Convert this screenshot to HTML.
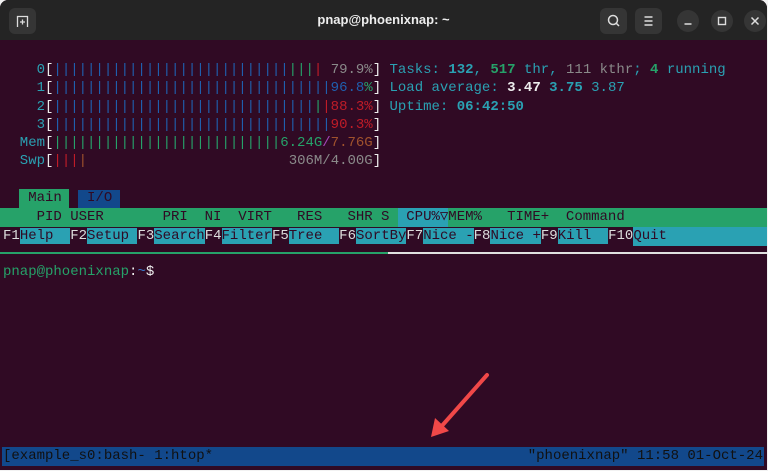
<!DOCTYPE html>
<html><head><meta charset="utf-8"><style>
*{margin:0;padding:0;box-sizing:border-box}
html,body{width:768px;height:471px;overflow:hidden;background:#f2f2f2}
#win{position:absolute;left:0;top:0;width:767px;height:470px;background:#300a24;border-radius:8px 8px 0 0;overflow:hidden}
#tb{position:absolute;left:0;top:0;width:767px;height:40px;background:#242424}
.btn{position:absolute;top:8px;width:27px;height:26px;background:#353535;border-radius:6px}
.cir{position:absolute;top:10px;width:22px;height:22px;background:#353535;border-radius:50%}
#title{position:absolute;left:0;width:767px;top:12px;text-align:center;color:#eee;font:bold 13px "Liberation Sans",sans-serif}
.t{position:absolute;left:3px;font:14px/18.3px "Liberation Mono",monospace;white-space:pre;color:#ccc}
.b{color:#1f5fae}.g{color:#26a269}.r{color:#c01c28}.c{color:#2aa1b3}.w{color:#eee}.gr{color:#8a8a8a}.o{color:#a0522d}.m{color:#a347ba}
.fk{color:#ddd}.fl{background:#2aa1b3;color:#300a24}
</style></head><body>
<div id="win">
<div id="tb">
 <div class="btn" style="left:9px"><svg width="27" height="26"><path d="M8.5 19V8.5h10V19M11 14h5M13.5 11.5v5" stroke="#ddd" stroke-width="1.3" fill="none"/></svg></div>
 <div id="title">pnap@phoenixnap: ~</div>
 <div class="btn" style="left:600px"><svg width="27" height="26"><circle cx="13" cy="12" r="4.5" stroke="#ddd" stroke-width="1.5" fill="none"/><path d="M16 15l3 3" stroke="#ddd" stroke-width="1.5"/></svg></div>
 <div class="btn" style="left:635px"><svg width="27" height="26"><path d="M9.5 9h8M9.5 13h8M9.5 17h8" stroke="#ddd" stroke-width="1.4"/></svg></div>
 <div class="cir" style="left:677px"><svg width="22" height="22"><path d="M7.5 14h7" stroke="#ddd" stroke-width="1.5"/></svg></div>
 <div class="cir" style="left:711px"><svg width="22" height="22"><rect x="7.5" y="7.5" width="7" height="7" stroke="#ddd" stroke-width="1.4" fill="none"/></svg></div>
 <div class="cir" style="left:744px"><svg width="22" height="22"><path d="M7.5 7.5l7 7M14.5 7.5l-7 7" stroke="#ddd" stroke-width="1.5"/></svg></div>
</div>
<div class="t" style="top:61px"><span class="c">    0</span><span class="w">[</span><span class="b">||||||||||||||||||||||||||||</span><span class="g">|||</span><span class="r">|</span> <span class="gr">79.9%</span><span class="w">]</span> <span class="c">Tasks: </span><b class="c">132</b><span class="c">, </span><b class="g">517</b><span class="c"> thr, </span><span class="gr">111 kthr</span><span class="c">; </span><b class="g">4</b><span class="c"> running</span>
<span class="c">    1</span><span class="w">[</span><span class="b">|||||||||||||||||||||||||||||||||96.8</span><span class="g">%</span><span class="w">]</span> <span class="c">Load average: </span><b class="w">3.47</b> <b class="c">3.75</b> <span class="c">3.87</span>
<span class="c">    2</span><span class="w">[</span><span class="b">|||||||||||||||||||||||||||||||</span><span class="g">|</span><span class="r">|88.3%</span><span class="w">]</span> <span class="c">Uptime: </span><b class="c">06:42:50</b>
<span class="c">    3</span><span class="w">[</span><span class="b">|||||||||||||||||||||||||||||||||</span><span class="r">90.3%</span><span class="w">]</span>
<span class="c">  Mem</span><span class="w">[</span><span class="g">|||||||||||||||||||||||||||6.24G</span><span class="m">/</span><span class="o">7.76G</span><span class="w">]</span>
<span class="c">  Swp</span><span class="w">[</span><span class="r">|||</span><span class="o">|</span>                        <span class="gr">306M/4.00G</span><span class="w">]</span>
</div>
<div style="position:absolute;left:19px;top:189px;width:50px;height:19px;background:#26a269"></div>
<div style="position:absolute;left:78px;top:190px;width:42px;height:18px;background:#12488b"></div>
<div style="position:absolute;left:0;top:208px;width:767px;height:19px;background:#26a269"></div>
<div style="position:absolute;left:398px;top:208px;width:50px;height:19px;background:#2aa1b3"></div>
<div class="t" style="top:189px;color:#300a24">   Main   I/O</div>
<div class="t" style="top:208px;color:#300a24">    PID USER       PRI  NI  VIRT   RES   SHR S  CPU%▽MEM%   TIME+  Command</div>
<div style="position:absolute;left:633px;top:227px;width:134px;height:19px;background:#2aa1b3"></div>
<div class="t" style="top:227px"><span class="fk">F1</span><span class="fl">Help  </span><span class="fk">F2</span><span class="fl">Setup </span><span class="fk">F3</span><span class="fl">Search</span><span class="fk">F4</span><span class="fl">Filter</span><span class="fk">F5</span><span class="fl">Tree  </span><span class="fk">F6</span><span class="fl">SortBy</span><span class="fk">F7</span><span class="fl">Nice -</span><span class="fk">F8</span><span class="fl">Nice +</span><span class="fk">F9</span><span class="fl">Kill  </span><span class="fk">F10</span><span class="fl">Quit</span></div>
<div style="position:absolute;left:0;top:252px;width:388px;height:2px;background:#26a269"></div>
<div style="position:absolute;left:388px;top:252px;width:379px;height:2px;background:#e0e0e0"></div>
<div class="t" style="top:263px"><span class="g">pnap@phoenixnap</span><span class="w">:</span><span style="color:#3b74c4">~</span><span class="w">$</span></div>
<div style="position:absolute;left:2px;top:447px;width:762px;height:19px;background:#12488b"></div>
<div class="t" style="top:447px;color:#111">[example_s0:bash- 1:htop*</div>
<div class="t" style="top:447px;left:auto;right:4px;color:#111">"phoenixnap" 11:58 01-Oct-24</div>
<svg style="position:absolute;left:0;top:0" width="768" height="471"><path d="M487 375L440 428" stroke="#f04848" stroke-width="4" stroke-linecap="round"/><path d="M431 437L435 418L449 431Z" fill="#f04848"/></svg>
</div>
</body></html>
